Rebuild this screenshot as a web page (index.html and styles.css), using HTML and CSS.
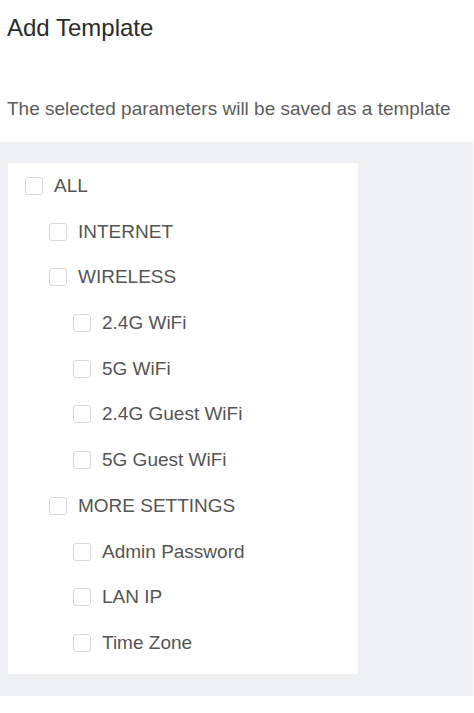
FILE: index.html
```html
<!DOCTYPE html>
<html lang="en">
<head>
  <meta charset="UTF-8">
  <meta name="viewport" content="width=device-width, initial-scale=1.0">
  <title>Add Template</title>
  <link rel="stylesheet" href="styles.css">
</head>
<body>
  <div class="dialog">
    <h1 class="dialog-title">Add Template</h1>
    <p class="dialog-desc">The selected parameters will be saved as a template</p>

    <div class="panel">
      <ul class="tree">
        <li class="tree-row level-0"><span class="check"></span><span class="label">ALL</span></li>
        <li class="tree-row level-1"><span class="check"></span><span class="label">INTERNET</span></li>
        <li class="tree-row level-1"><span class="check"></span><span class="label">WIRELESS</span></li>
        <li class="tree-row level-2"><span class="check"></span><span class="label">2.4G WiFi</span></li>
        <li class="tree-row level-2"><span class="check"></span><span class="label">5G WiFi</span></li>
        <li class="tree-row level-2"><span class="check"></span><span class="label">2.4G Guest WiFi</span></li>
        <li class="tree-row level-2"><span class="check"></span><span class="label">5G Guest WiFi</span></li>
        <li class="tree-row level-1"><span class="check"></span><span class="label">MORE SETTINGS</span></li>
        <li class="tree-row level-2"><span class="check"></span><span class="label">Admin Password</span></li>
        <li class="tree-row level-2"><span class="check"></span><span class="label">LAN IP</span></li>
        <li class="tree-row level-2"><span class="check"></span><span class="label">Time Zone</span></li>
      </ul>
    </div>
  </div>
</body>
</html>
```

FILE: styles.css
```css
/* General Styles */
body {
  margin: 0;
  font-family: 'Liberation Sans', Arial, sans-serif;
  background: #fff;
}

.dialog {
  width: 473px;
}

.dialog-title {
  margin: 0;
  padding: 12px 0 0 7px;
  font-size: 24px;
  font-weight: normal;
  line-height: 32px;
  color: #2b2b2b;
}

.dialog-desc {
  margin: 0;
  padding: 53px 0 0 7px;
  font-size: 19px;
  line-height: 24px;
  color: #5c5c5c;
}

/* Gray area holding the tree */
.panel {
  margin-top: 21px;
  padding: 21px 8px 22px;
  background: #eff0f4;
}

.tree {
  list-style: none;
  margin: 0;
  width: 350px;
  padding: 5px 0 3px;
  background: #fff;
}

.tree-row {
  display: flex;
  align-items: center;
  height: 36px;
  margin-bottom: 9.7px;
  font-size: 19px;
  color: #555;
}

.level-0 { padding-left: 17px; }
.level-1 { padding-left: 41px; }
.level-2 { padding-left: 65px; }

.check {
  box-sizing: border-box;
  width: 18px;
  height: 18px;
  border: 1px solid #d6d8dc;
  border-radius: 3px;
  background: #fff;
  margin-right: 11px;
}
```
